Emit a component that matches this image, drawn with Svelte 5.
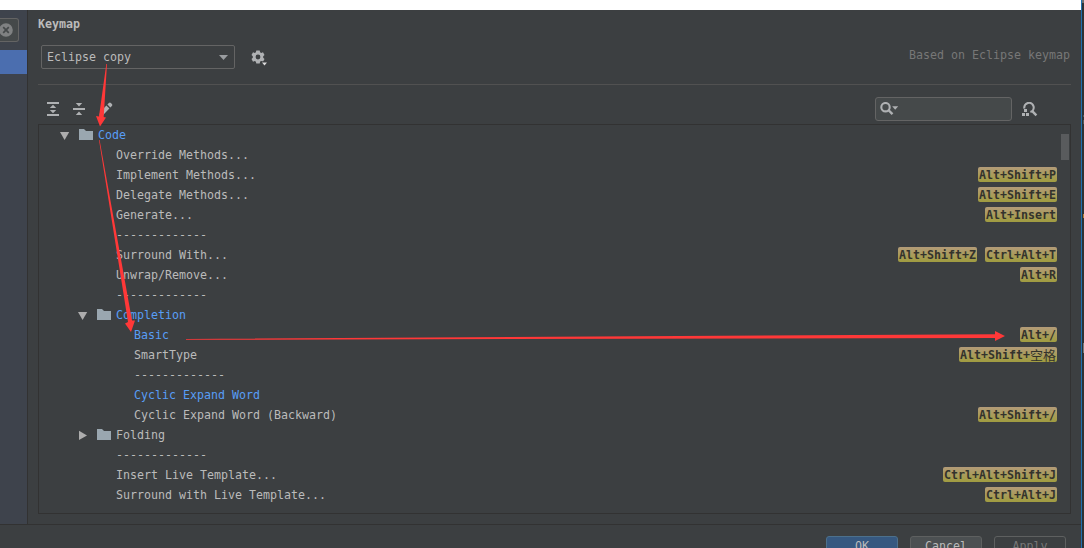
<script lang="ts">
  type Row = {
    label: string;
    level: number;
    folder?: 'open' | 'closed';
    changed?: boolean;
    keys?: string[];
  };

  const DASHES = '-------------';

  const rows: Row[] = [
    { label: 'Code', level: 0, folder: 'open', changed: true },
    { label: 'Override Methods...', level: 1 },
    { label: 'Implement Methods...', level: 1, keys: ['Alt+Shift+P'] },
    { label: 'Delegate Methods...', level: 1, keys: ['Alt+Shift+E'] },
    { label: 'Generate...', level: 1, keys: ['Alt+Insert'] },
    { label: DASHES, level: 1 },
    { label: 'Surround With...', level: 1, keys: ['Alt+Shift+Z', 'Ctrl+Alt+T'] },
    { label: 'Unwrap/Remove...', level: 1, keys: ['Alt+R'] },
    { label: DASHES, level: 1 },
    { label: 'Completion', level: 1, folder: 'open', changed: true },
    { label: 'Basic', level: 2, changed: true, keys: ['Alt+/'] },
    { label: 'SmartType', level: 2, keys: ['Alt+Shift+空格'] },
    { label: DASHES, level: 2 },
    { label: 'Cyclic Expand Word', level: 2, changed: true },
    { label: 'Cyclic Expand Word (Backward)', level: 2, keys: ['Alt+Shift+/'] },
    { label: 'Folding', level: 1, folder: 'closed' },
    { label: DASHES, level: 1 },
    { label: 'Insert Live Template...', level: 1, keys: ['Ctrl+Alt+Shift+J'] },
    { label: 'Surround with Live Template...', level: 1, keys: ['Ctrl+Alt+J'] },
  ];

  // the space key's name is set apart: it uses the CJK face at its own size
  function split(key: string) {
    const at = key.search(/[\u4e00-\u9fff]/);
    return at < 0 ? [key, ''] : [key.slice(0, at), key.slice(at)];
  }
</script>

<div class="screen">
  <div class="window">
    <div class="titlebar"></div>
    <div class="body">
      <aside>
        <div class="side-search">
          <svg viewBox="0 0 14 14" width="14" height="14" aria-hidden="true">
            <circle cx="7" cy="7" r="6.8" fill="#7f8182" />
            <path d="M4.2 4.2l5.6 5.6M9.8 4.2l-5.6 5.6" stroke="#45494a" stroke-width="1.7" />
          </svg>
        </div>
        <div class="side-selected"></div>
      </aside>

      <main>
        <h1>Keymap</h1>
        <div class="scheme">
          <div class="combo">
            <span>Eclipse copy</span>
            <svg viewBox="0 0 9 5" width="9" height="5" aria-hidden="true">
              <path d="M0 0h9L4.5 5z" fill="#9a9da0" />
            </svg>
          </div>
          <svg class="gear" viewBox="0 0 16 16" width="16" height="16" aria-hidden="true">
            <path
              fill="#afb1b3"
              fill-rule="evenodd"
              d="M5.3.5h3.4l.4 1.8 1.1.6 1.8-.6 1.5 2.6-1.3 1.3v1.6l1.3 1.3-1.5 2.6-1.8-.6-1.1.6-.4 1.8H5.3l-.4-1.8-1.1-.6-1.8.6L.5 9.1l1.3-1.3V6.2L.5 4.9 2 2.3l1.8.6 1.1-.6zM7 4.6a2.4 2.4 0 1 0 0 4.8 2.4 2.4 0 0 0 0-4.8z"
            />
            <path d="M9.5 11.5H16v2L13.5 16H11z" fill="#3c3f41" />
            <path d="M11 12.5h5L13.5 15.5z" fill="#dcdcdc" />
          </svg>
          <span class="based">Based on Eclipse keymap</span>
        </div>

        <div class="tools">
          <svg viewBox="0 0 12 14" width="12" height="14" fill="#afb1b3" aria-hidden="true">
            <path d="M0 0h12v2H0zM0 12h12v2H0zM6 2.8l3.2 3.2H2.8zM6 11.2L2.8 8h6.4z" />
          </svg>
          <svg viewBox="0 0 12 14" width="12" height="14" fill="#afb1b3" aria-hidden="true">
            <path d="M0 6h12v2H0zM2.8 1h6.4L6 4.4zM6 9.6L9.2 13H2.8z" />
          </svg>
          <svg viewBox="0 0 14 14" width="14" height="14" fill="#afb1b3" aria-hidden="true">
            <path d="M.5 13.5l.6-3.6L7.4 3.6l3 3-6.3 6.3zM8.4 2.6L9.9 1.1q1-1 2 0l1 1q1 1 0 2l-1.5 1.5z" />
          </svg>
          <div class="search">
            <svg viewBox="0 0 20 14" width="20" height="14" aria-hidden="true">
              <circle cx="5.5" cy="5.2" r="4.2" fill="none" stroke="#afb1b3" stroke-width="2.1" />
              <path d="M8.3 8l4.2 4.2" stroke="#afb1b3" stroke-width="2.4" />
              <path d="M12.2 4.2h6L15.2 7.7z" fill="#afb1b3" />
            </svg>
          </div>
          <svg class="find" viewBox="0 0 16 15" width="16" height="15" aria-hidden="true">
            <path d="M2.4 6.5A4.7 4.7 0 1 1 8.4 10" fill="none" stroke="#afb1b3" stroke-width="2.1" />
            <path d="M10 8.8l4.4 4.6" stroke="#afb1b3" stroke-width="2.4" />
            <path d="M2 7h3v3H2zM0 11h3v3H0zM4 11h3v3H4z" fill="#afb1b3" />
          </svg>
        </div>

        <div class="tree">
          <div class="rows">
            {#each rows as row}
              <div class="row level-{row.level}" class:branch={row.folder} class:changed={row.changed}>
                {#if row.folder}
                  <svg class="toggle" viewBox="0 0 10 10" width="10" height="10" fill="#adadad" aria-hidden="true">
                    {#if row.folder === 'open'}
                      <path d="M0 2h9.2L4.6 10z" />
                    {:else}
                      <path d="M1 .8v9.2l8-4.6z" />
                    {/if}
                  </svg>
                  <svg class="folder" viewBox="0 0 14 11" width="14" height="11" aria-hidden="true">
                    <path d="M0 0h5l2 2H14v9H0z" fill="#9aa7b0" />
                  </svg>
                {/if}
                <span class="label">{row.label}</span>
                <span class="keys">
                  {#each row.keys ?? [] as key}
                    {@const [latin, cjk] = split(key)}
                    <kbd>{latin}{#if cjk}<span class="cjk">{cjk}</span>{/if}</kbd>
                  {/each}
                </span>
              </div>
            {/each}
          </div>
          <div class="thumb"></div>
        </div>
      </main>
    </div>

    <footer>
      <button class="ok" type="button">OK</button>
      <button type="button">Cancel</button>
      <button type="button" disabled>Apply</button>
    </footer>
  </div>
  <div class="behind">
    <svg viewBox="0 0 2 548" width="2" height="548" aria-hidden="true">
      <path d="M0 0h2v3H0z" fill="#6e7072" />
      <path d="M1 115h1v2H1zM1 120h1v4H1z" fill="#55585a" />
      <path d="M1 214h1v4H1z" fill="#b5803a" />
      <path d="M1 343h1v10H1z" fill="#777a7c" />
    </svg>
  </div>

  <!-- hand-drawn pointers laid over the dialog -->
  <svg class="arrows" viewBox="0 0 1084 548" width="1084" height="548" fill="#ff3838" aria-hidden="true">
    <path d="M106.3 64L107 64L103.7 117L106 117.5L100 126.5L96 116L99 116.5z" />
    <path d="M99 140L99.6 140L132 320.5L135 320.5L131 332L125 323.5L128 322z" />
    <path d="M186 339L995 334.2V331L1005 336L995 341V338L186 339.8z" />
  </svg>
</div>

<style>
  :global(body) {
    margin: 0;
    overflow: hidden;
    background: #3c3f41;
  }
  .screen {
    position: relative;
    display: flex;
    width: 1084px;
    height: 548px;
    overflow: hidden;
    font-family: 'DejaVu Sans Mono', 'Noto Sans CJK SC', monospace;
    font-size: 11.63px;
    line-height: 20px;
    color: #bbbbbb;
  }
  .window {
    display: flex;
    flex: none;
    flex-direction: column;
    width: 1081px;
    background: #3c3f41;
  }
  .behind {
    flex: none;
    width: 2px;
    border-left: 1px solid #1f6fb0;
    background: #2f3133;
  }
  .behind svg { display: block; }
  .titlebar {
    flex: none;
    height: 10px;
    background: #ffffff;
  }
  .body {
    display: flex;
    height: 514px;
    flex: none;
  }
  aside {
    box-sizing: border-box;
    width: 28px;
    padding-top: 8px;
    border-right: 1px solid #323232;
    background: #3e434c;
  }
  .side-search {
    box-sizing: border-box;
    display: flex;
    align-items: center;
    width: 19px;
    height: 24px;
    border: 1px solid #646464;
    border-left: 0;
    border-radius: 0 3px 3px 0;
    background: #45494a;
  }
  .side-search svg { margin-left: -1px; }
  .side-selected {
    height: 24px;
    margin-top: 8px;
    background: #4b6eaf;
  }
  main {
    flex: 1;
    padding: 4px 10px 0;
  }
  h1 {
    margin: 0;
    font-size: inherit;
    font-weight: bold;
    line-height: 20px;
  }
  .scheme {
    display: flex;
    align-items: center;
    height: 26px;
    padding: 10px 0 14px 3px;
    border-bottom: 1px solid #515151;
  }
  .combo {
    box-sizing: border-box;
    display: flex;
    align-items: center;
    justify-content: space-between;
    width: 194px;
    height: 24px;
    padding: 0 6px 0 5px;
    border: 1px solid #646464;
    border-radius: 2px;
  }
  .gear { margin: 1px 0 0 16px; }
  .based {
    margin: -4px 1px 0 auto;
    color: #777777;
  }
  .tools {
    display: flex;
    align-items: center;
    gap: 14px;
    height: 39px;
    padding: 0 40px 0 9px;
  }
  .tools > svg { margin-top: 9px; }
  .search {
    box-sizing: border-box;
    display: flex;
    align-items: center;
    width: 137px;
    height: 24px;
    margin: 9px -4px 0 auto;
    padding-left: 4px;
    border: 1px solid #646464;
    border-radius: 3px;
    background: #45494a;
  }
  .tools > .find { margin-right: -7px; }
  .tree {
    box-sizing: border-box;
    display: flex;
    height: 390px;
    border: 1px solid #323232;
  }
  .rows { flex: 1; }
  .row {
    display: flex;
    align-items: center;
    height: 20px;
    padding-left: 59px;
  }
  .level-1 { padding-left: 77px; }
  .level-2 { padding-left: 95px; }
  .branch { padding-left: 21px; }
  .branch.level-1 { padding-left: 39px; }
  .toggle { margin-right: 9px; }
  .folder { margin: -1px 5px 0 0; }
  .label { white-space: pre; }
  .changed { color: #589df6; }
  .keys {
    display: flex;
    gap: 8px;
    margin-left: auto;
    padding-right: 4px;
  }
  kbd {
    display: flex;
    height: 15px;
    margin-top: -1px;
    padding: 0 1px;
    border-radius: 2px;
    background: linear-gradient(#b39b78, #a09c40);
    font-family: inherit;
    font-size: 11.63px;
    font-weight: bold;
    line-height: 17px;
    white-space: nowrap;
    color: #33332c;
  }
  .cjk {
    font-family: 'Noto Sans CJK SC', sans-serif;
    font-size: 13px;
    font-weight: normal;
    line-height: 15px;
  }
  .thumb {
    width: 8px;
    height: 26px;
    margin: 9px 1px 0 0;
    background: #595b5d;
  }
  footer {
    display: flex;
    justify-content: flex-end;
    gap: 12px;
    height: 23px;
    padding: 11px 15px 0 0;
    border-top: 1px solid #323232;
  }
  button {
    flex: none;
    box-sizing: border-box;
    width: 72px;
    height: 24px;
    padding: 0 0 4px;
    border: 1px solid #5e6060;
    border-radius: 3px;
    background: #4c5052;
    font: inherit;
    line-height: 18px;
    color: #bbbbbb;
  }
  .ok {
    border-color: #4c708c;
    background: #365880;
  }
  button:disabled {
    background: none;
    color: #777777;
  }
  .arrows {
    position: absolute;
    inset: 0;
  }
</style>
